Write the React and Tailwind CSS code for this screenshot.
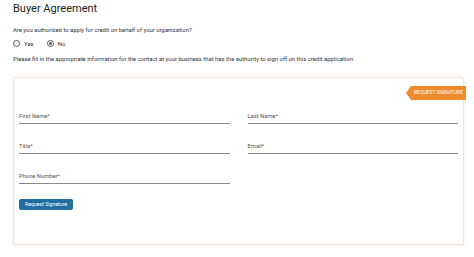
import React from 'react';

const Field = ({ label }) => (
  <div className="flex flex-col">
    <label className="text-[5.8px] leading-[7px] text-[#555]">{label}</label>
    <div className="mt-[3px] h-px bg-[#8a8a8a]" />
  </div>
);

const Radio = ({ label, checked }) => (
  <label className="flex items-center gap-[4px]">
    <span className="flex h-[7px] w-[7px] items-center justify-center rounded-full border border-[#555]">
      {checked && <span className="h-[3px] w-[3px] rounded-full bg-[#555]" />}
    </span>
    <span>{label}</span>
  </label>
);

export default function App() {
  return (
    <div className="min-h-screen bg-white px-[13px] text-[#333]" style={{ fontFamily: 'Roboto, "Liberation Sans", sans-serif' }}>
      <h1 className="text-[11px] leading-[18px] text-[#222]">Buyer Agreement</h1>
      <p className="mt-[9px] text-[5.9px] leading-[7px]">Are you authorized to apply for credit on behalf of your organization?</p>
      <div className="mt-[6px] flex items-center gap-[13px] text-[6px] leading-[7px]">
        <Radio label="Yes" />
        <Radio label="No" checked />
      </div>
      <p className="mt-[9px] text-[5.9px] leading-[7px]">
        Please fill in the appropriate information for the contact at your business that has the authority to sign off on this credit application.
      </p>
      <div className="relative mt-[14px] h-[168px] w-[451px] rounded-[2px] border border-[#f3e4d6] shadow-[0_0_2px_rgba(230,200,170,0.5)]">
        <div className="absolute right-[-3px] top-[8px] flex h-[14px] items-center whitespace-nowrap bg-[#f08a2e] pl-[8px] pr-[3px] text-[5px] uppercase text-white [clip-path:polygon(5px_0,100%_0,100%_100%,5px_100%,0_50%)]">
          Request Signature
        </div>
        <div className="grid grid-cols-2 gap-x-[18px] gap-y-[19px] px-[5px] pt-[35px]">
          <Field label="First Name*" />
          <Field label="Last Name*" />
          <Field label="Title*" />
          <Field label="Email*" />
          <Field label="Phone Number*" />
        </div>
        <button className="ml-[5px] mt-[15px] h-[11px] rounded-[2px] bg-[#1f6fa1] px-[6px] text-[5.2px] text-white">
          Request Signature
        </button>
      </div>
    </div>
  );
}
